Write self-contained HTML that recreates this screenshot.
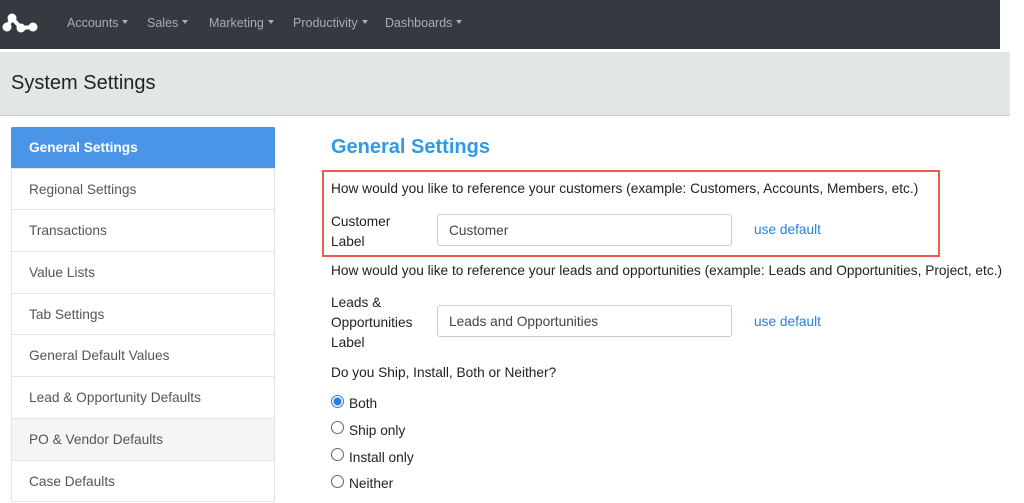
<!DOCTYPE html>
<html><head><style>
body{margin:0;width:1024px;height:503px;overflow:hidden;background:#fff;font-family:"Liberation Sans",sans-serif;position:relative}
.nav{position:absolute;left:0;top:0;width:1000px;height:49px;background:#343a40}
.nav span{position:absolute;top:16px;color:#a9acb0;font-size:12.5px}
.nav span:after{content:"";display:inline-block;margin-left:4px;vertical-align:3px;border-left:3.5px solid transparent;border-right:3.5px solid transparent;border-top:4px solid #a9acb0}
.hdr{position:absolute;left:0;top:52px;width:1010px;height:63px;background:#e3e6e7;border-bottom:1px solid #c8cbcd}
.hdr div{position:absolute;left:11px;top:20px;font-size:20px;color:#222}
.side{position:absolute;left:11px;top:127px;width:262px;border:1px solid #e3e3e3;border-bottom:none}
.side div{height:40.7px;border-bottom:1px solid #e6e6e6;font-size:13.7px;color:#555;padding-left:17px;line-height:41px}
.side .a{background:#4a95e8;color:#fff;font-weight:bold;margin:-1px -1px 0 -1px;padding-left:18px;border-radius:2px 2px 0 0}
.side .g{background:#f4f5f6}
.t{position:absolute;font-size:13.7px;color:#222}
input{position:absolute;left:437px;width:295px;height:32px;box-sizing:border-box;border:1px solid #ccc;border-radius:3px;font:13.7px "Liberation Sans",sans-serif;color:#444;padding-left:11px}
.l{position:absolute;left:754px;color:#2a7ee0;font-size:13.7px}
.r{position:absolute;left:331px;width:11px;height:11px;border:1px solid #666;border-radius:50%}
</style></head><body>
<div class="nav">
<svg style="position:absolute;left:0;top:0" width="45" height="45"><g fill="#fff"><circle cx="12" cy="18" r="4.5"/><circle cx="7" cy="27" r="4.5"/><circle cx="21" cy="28" r="4.5"/><circle cx="33" cy="27" r="4.5"/></g><path d="M7 27L12 18L21 28L33 27" stroke="#fff" stroke-width="4" fill="none"/></svg>
<span style="left:67px">Accounts</span><span style="left:147px">Sales</span><span style="left:209px">Marketing</span><span style="left:293px">Productivity</span><span style="left:385px">Dashboards</span>
</div>
<div class="hdr"><div>System Settings</div></div>
<div class="side">
<div class="a">General Settings</div><div>Regional Settings</div><div>Transactions</div><div>Value Lists</div><div>Tab Settings</div><div>General Default Values</div><div>Lead &amp; Opportunity Defaults</div><div class="g">PO &amp; Vendor Defaults</div><div>Case Defaults</div>
</div>
<div class="t" style="left:331px;top:136px;font-size:20px;color:#2e9be6;font-weight:bold">General Settings</div>
<div style="position:absolute;left:322px;top:170px;width:614px;height:83px;border:2px solid #ee5a4f"></div>
<div class="t" style="left:331px;top:181px">How would you like to reference your customers (example: Customers, Accounts, Members, etc.)</div>
<div class="t" style="left:331px;top:212px;line-height:20px">Customer<br>Label</div>
<input style="top:214px" value="Customer"><span class="l" style="top:222px">use default</span>
<div class="t" style="left:331px;top:263px">How would you like to reference your leads and opportunities (example: Leads and Opportunities, Project, etc.)</div>
<div class="t" style="left:331px;top:293px;line-height:20px">Leads &amp;<br>Opportunities<br>Label</div>
<input style="top:305px" value="Leads and Opportunities"><span class="l" style="top:314px">use default</span>
<div class="t" style="left:331px;top:365px">Do you Ship, Install, Both or Neither?</div>
<div class="r" style="top:395px;border-color:#2a7ee0;background:radial-gradient(circle,#2a7ee0 3.5px,#fff 4.5px)"></div><div class="t" style="left:349px;top:396px">Both</div>
<div class="r" style="top:421px"></div><div class="t" style="left:349px;top:423px">Ship only</div>
<div class="r" style="top:448px"></div><div class="t" style="left:349px;top:450px">Install only</div>
<div class="r" style="top:475px"></div><div class="t" style="left:349px;top:476px">Neither</div>
</body></html>
